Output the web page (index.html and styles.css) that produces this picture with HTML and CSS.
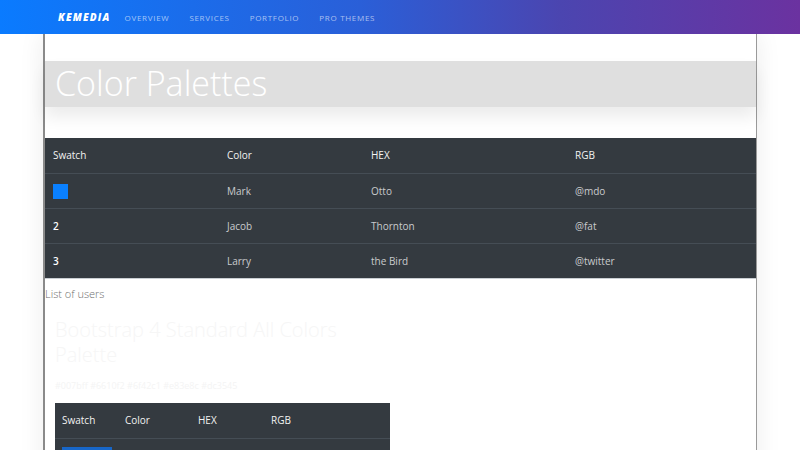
FILE: index.html
```html
<!DOCTYPE html>
<html lang="en">
<head>
<meta charset="UTF-8">
<meta name="viewport" content="width=device-width, initial-scale=1.0">
<title>Color Palettes</title>
<link rel="stylesheet" href="styles.css">
</head>
<body>
<nav class="navbar">
    <a class="brand" href="#">KEMEDIA</a>
    <ul class="nav-links">
        <li><a href="#">OVERVIEW</a></li>
        <li><a href="#">SERVICES</a></li>
        <li><a href="#">PORTFOLIO</a></li>
        <li><a href="#">PRO THEMES</a></li>
    </ul>
</nav>
<div class="container">
    <div class="page-header">
        <h1>Color Palettes</h1>
    </div>
    <table class="palette-table">
        <caption>List of users</caption>
        <colgroup>
            <col style="width: 174px">
            <col style="width: 144px">
            <col style="width: 204px">
            <col>
        </colgroup>
        <thead>
            <tr><th>Swatch</th><th>Color</th><th>HEX</th><th>RGB</th></tr>
        </thead>
        <tbody>
            <tr><td><span class="swatch"></span></td><td>Mark</td><td>Otto</td><td>@mdo</td></tr>
            <tr><td class="num">2</td><td>Jacob</td><td>Thornton</td><td>@fat</td></tr>
            <tr><td class="num">3</td><td>Larry</td><td>the Bird</td><td>@twitter</td></tr>
        </tbody>
    </table>

    <section class="palette-section">
        <h2>Bootstrap 4 Standard All Colors Palette</h2>
        <p class="subtitle">#007bff #6610f2 #6f42c1 #e83e8c #dc3545</p>
        <table class="palette-table small">
            <colgroup>
                <col style="width: 63px">
                <col style="width: 73px">
                <col style="width: 73px">
                <col>
            </colgroup>
            <thead>
                <tr><th>Swatch</th><th>Color</th><th>HEX</th><th>RGB</th></tr>
            </thead>
            <tbody>
                <tr><td><span class="swatch wide"></span></td><td>Blue</td><td>#007bff</td><td>0, 123, 255</td></tr>
            </tbody>
        </table>
    </section>
</div>
</body>
</html>
```

FILE: styles.css
```css
body {
    font-family: "Open Sans", Arial, sans-serif;
    margin: 0;
    padding: 0;
    background-color: #fff;
    font-size: 10px;
    overflow: hidden;
}
.navbar {
    height: 34px;
    display: flex;
    align-items: center;
    padding-left: 58px;
    background: linear-gradient(to right, #0a7bff 0%, #2a5fd8 45%, #4b45b0 70%, #6b32a0 100%);
    position: relative;
    z-index: 2;
}
.brand {
    color: #fff;
    font-weight: 800;
    font-style: italic;
    font-size: 10px;
    letter-spacing: 1.2px;
    text-decoration: none;
    margin-right: 14px;
}
.nav-links {
    list-style-type: none;
    margin: 0;
    padding: 0;
    display: flex;
    gap: 20px;
}
.nav-links a {
    color: rgba(255, 255, 255, 0.6);
    font-size: 8px;
    letter-spacing: 0.7px;
    text-decoration: none;
}
.container {
    width: 711px;
    margin: 0 0 0 43px;
    border-left: 2px solid #8a8a8a;
    border-right: 1px solid #9a9a9a;
    min-height: 420px;
    padding-top: 27px;
    box-shadow: 0 0 24px rgba(0, 0, 0, 0.08);
}
.page-header {
    background-color: #dfdfdf;
    height: 46px;
    padding-left: 10px;
    box-shadow: 0 10px 16px rgba(0, 0, 0, 0.08);
    margin-bottom: 31px;
}
.page-header h1 {
    margin: 0;
    color: #fff;
    font-weight: 300;
    font-size: 34px;
    line-height: 44px;
}
.palette-table {
    width: 100%;
    border-collapse: collapse;
    background-color: #343a40;
    color: #fff;
    table-layout: fixed;
    border-bottom: 1px solid #c9ced3;
}
.palette-table caption {
    caption-side: bottom;
    text-align: left;
    color: #6f6f6f;
    font-weight: 300;
    font-size: 11px;
    padding-top: 7px;
}
.palette-table th {
    text-align: left;
    font-weight: 400;
    padding: 10px 8px;
    line-height: 15px;
    color: #f2f2f2;
}
.palette-table td {
    padding: 10px 8px 9px;
    line-height: 15px;
    border-top: 1px solid #454d55;
    color: #c9cbcd;
    font-weight: 400;
    vertical-align: middle;
}
.palette-table td.num {
    color: #fff;
    font-weight: 600;
}
.swatch {
    display: block;
    width: 15px;
    height: 15px;
    background-color: #0a80ff;
}
.swatch.wide {
    width: 50px;
    height: 40px;
    background-color: #1766c8;
}
.palette-section {
    padding: 16px 0 0 10px;
}
.palette-section h2 {
    margin: 0;
    color: #f6f6f6;
    font-weight: 300;
    font-size: 20px;
    line-height: 25px;
    width: 300px;
}
.subtitle {
    margin: 12px 0 11px;
    color: #f4f4f4;
    font-size: 9px;
}
.palette-table.small {
    width: 335px;
    border-bottom: none;
}
.palette-table.small th {
    padding: 10px 7px;
}
.palette-table.small td {
    padding: 8px 7px 9px;
}
```
